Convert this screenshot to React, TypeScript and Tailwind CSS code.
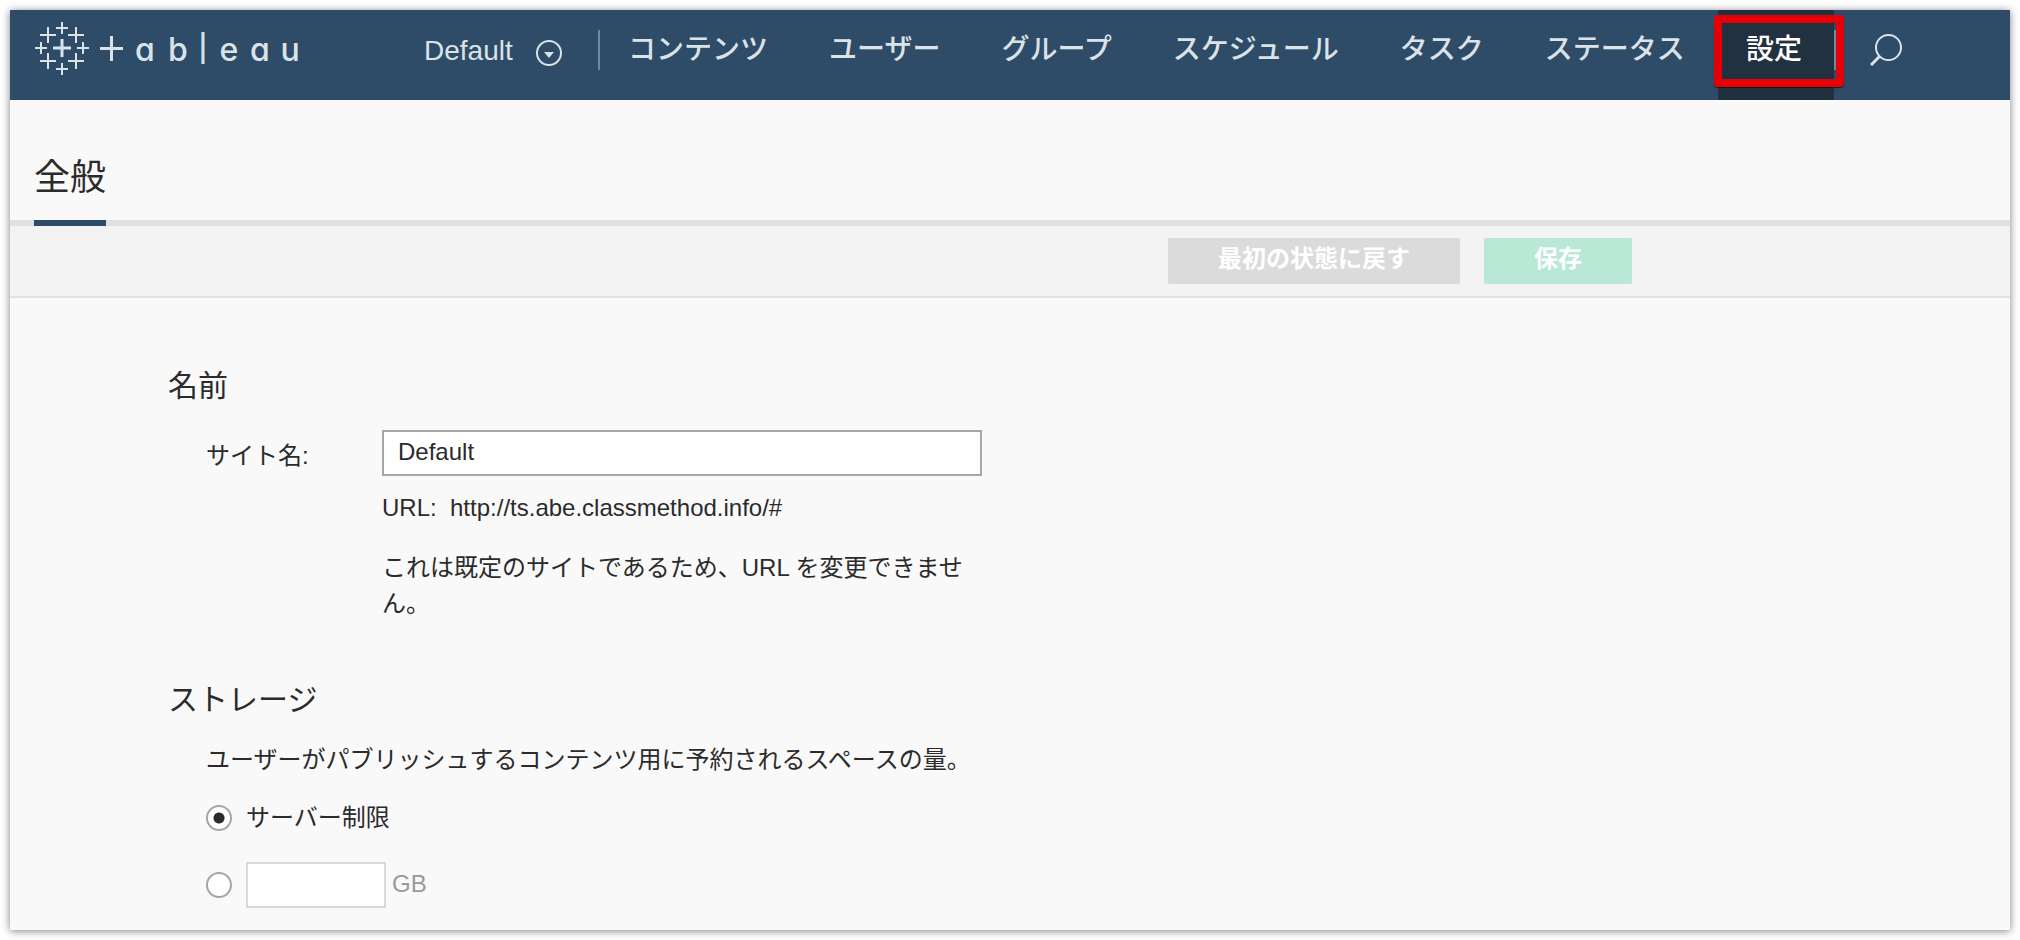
import React, { useState } from 'react'

const menus = ['コンテンツ', 'ユーザー', 'グループ', 'スケジュール', 'タスク', 'ステータス', '設定']

// ロゴの十字 [x, y, 半分の長さ, 線の太さ]
const crosses = [
  [27, 26, 9, 3],
  [27, 6, 6, 2],
  [27, 47, 6, 2],
  [6, 26, 6, 2],
  [48, 26, 6, 2],
  [13, 13, 8, 2],
  [41, 13, 8, 2],
  [13, 39, 8, 2],
  [41, 39, 8, 2],
]

function Logo() {
  return (
    <svg width="270" height="56" viewBox="0 0 270 56" role="img" aria-label="tableau">
      <g stroke="#dbe2e8" fill="none">
        {crosses.map(([x, y, r, w]) => (
          <path key={`${x}-${y}`} strokeWidth={w} d={`M${x - r} ${y}H${x + r}M${x} ${y - r}V${y + r}`} />
        ))}
        <path strokeWidth="3" d="M65 26.5H88M76.5 14V39" />
      </g>
      <g
        fill="#dbe2e8"
        fontFamily="Inter, sans-serif"
        fontSize="32"
        fontWeight="500"
        textAnchor="middle"
        style={{ fontFeatureSettings: '"cv11"' }}
      >
        <text x="110" y="39">a</text>
        <text x="143" y="39">b</text>
        <text x="168" y="42" fontSize="44" fontWeight="300">l</text>
        <text x="194" y="39">e</text>
        <text x="225" y="39">a</text>
        <text x="255" y="39">u</text>
      </g>
    </svg>
  )
}

function Header() {
  return (
    <header className="flex h-[90px] bg-[#2e4c67] text-[28px] leading-9 text-[#dbe2e8]">
      <div className="w-[414px] shrink-0 pt-3 pl-[25px]">
        <Logo />
      </div>
      {/* サイト選択 */}
      <button className="flex h-[82px] w-[174px] shrink-0 items-center justify-between pr-9">
        Default
        <svg width="26" height="26" viewBox="0 0 26 26" className="mt-1">
          <circle cx="13" cy="13" r="12" fill="none" stroke="currentColor" strokeWidth="2" />
          <path d="M8 12h10l-5 6z" fill="currentColor" />
        </svg>
      </button>
      <div className="mt-5 h-10 w-[2px] shrink-0 bg-[#6f8a9c]" />
      {/* メニュー */}
      <nav className="flex shrink-0 gap-px font-medium">
        {menus.map(menu =>
          menu === '設定' ? (
            <a key={menu} href="#" className="relative bg-[#22313f] pt-[22px] pr-8 pl-7 text-white">
              {menu}
              <span className="absolute top-[5px] -right-[10px] -left-1 h-[72px] rounded-[4px] border-8 border-[#e40006] shadow-[0_1px_1px_rgba(0,0,0,0.6)]" />
            </a>
          ) : (
            <a key={menu} href="#" className="pt-[22px] pr-8 pl-7">
              {menu}
            </a>
          ),
        )}
      </nav>
      <div className="mt-5 h-10 w-[2px] shrink-0 bg-[#6f8a9c]" />
      <button aria-label="検索" className="ml-[34px] flex h-20 items-center">
        <svg width="32" height="32" viewBox="0 0 32 32" fill="none" stroke="currentColor">
          <circle cx="18.5" cy="13.5" r="12.5" strokeWidth="2" />
          <path d="M10 22L1 31" strokeWidth="3" />
        </svg>
      </button>
    </header>
  )
}

function App() {
  const [siteName, setSiteName] = useState('Default')
  const [limit, setLimit] = useState('server')
  const [size, setSize] = useState('')

  const radio =
    'size-[26px] shrink-0 appearance-none rounded-full border-2 border-[#a6a6a6] bg-white checked:bg-[radial-gradient(circle,#2b2b2b_5px,#fff_6px)]'

  return (
    <div className="min-h-screen bg-white p-[10px] font-['Liberation_Sans','Noto_Sans_CJK_JP',sans-serif] text-[#2b2b2b]">
      <div className="bg-[#f9f9f9] shadow-[0_1px_8px_rgba(0,0,0,0.5)]">
        <Header />

        {/* タブ */}
        <div className="flex h-[126px] items-end border-b-[6px] border-[#e1e1e1] pl-6">
          <h1 className="-mb-[6px] border-b-[6px] border-[#2e4c67] pb-[18px] text-4xl leading-[48px]">全般</h1>
        </div>

        {/* ボタン */}
        <div className="border-b-2 border-[#e1e1e1] bg-[#f3f3f3] py-3">
          <div className="flex max-w-[1622px] justify-end gap-6 text-2xl font-bold text-white">
            <button disabled className="h-[46px] rounded-[2px] bg-[#dbdbdb] px-[50px] pb-1 leading-9">
              最初の状態に戻す
            </button>
            <button disabled className="h-[46px] rounded-[2px] bg-[#b9e8d6] px-[50px] pb-1 leading-9">
              保存
            </button>
          </div>
        </div>

        <main className="px-[158px] pt-[70px] pb-[22px] text-2xl leading-9">
          {/* 名前 */}
          <section className="mb-[60px]">
            <h2 className="mb-[26px] text-[30px] leading-9">名前</h2>
            <div className="flex pl-[38px]">
              <label htmlFor="siteName" className="w-44 shrink-0 pt-2">
                サイト名:
              </label>
              <div className="w-[600px]">
                <input
                  id="siteName"
                  type="text"
                  value={siteName}
                  onChange={e => setSiteName(e.target.value)}
                  className="block h-[46px] w-full border-2 border-[#a6a6a6] bg-white px-[14px] pb-[2px]"
                />
                <p className="mt-[14px]">
                  URL:&nbsp; http://ts.abe.classmethod.info/#
                </p>
                <p className="mt-6">これは既定のサイトであるため、URL を変更できません。</p>
              </div>
            </div>
          </section>

          {/* ストレージ */}
          <section>
            <h2 className="mb-6 text-[30px] leading-9">ストレージ</h2>
            <div className="pl-[38px]">
              <p>ユーザーがパブリッシュするコンテンツ用に予約されるスペースの量。</p>
              <label className="mt-[22px] flex items-center gap-[14px]">
                <input
                  type="radio"
                  name="limit"
                  checked={limit === 'server'}
                  onChange={() => setLimit('server')}
                  className={radio}
                />
                <span>サーバー制限</span>
              </label>
              <div className="mt-[26px] flex items-center">
                <input
                  type="radio"
                  name="limit"
                  aria-label="GB"
                  checked={limit === 'gb'}
                  onChange={() => setLimit('gb')}
                  className={radio}
                />
                <input
                  id="size"
                  type="text"
                  aria-label="GB"
                  value={size}
                  onChange={e => setSize(e.target.value)}
                  disabled={limit === 'server'}
                  className="ml-[14px] h-[46px] w-[140px] border-2 border-[#d9d9d9] bg-white px-[14px]"
                />
                <label htmlFor="size" className="ml-[6px] pb-[2px] text-[#999]">
                  GB
                </label>
              </div>
            </div>
          </section>
        </main>
      </div>
    </div>
  )
}

export default App
